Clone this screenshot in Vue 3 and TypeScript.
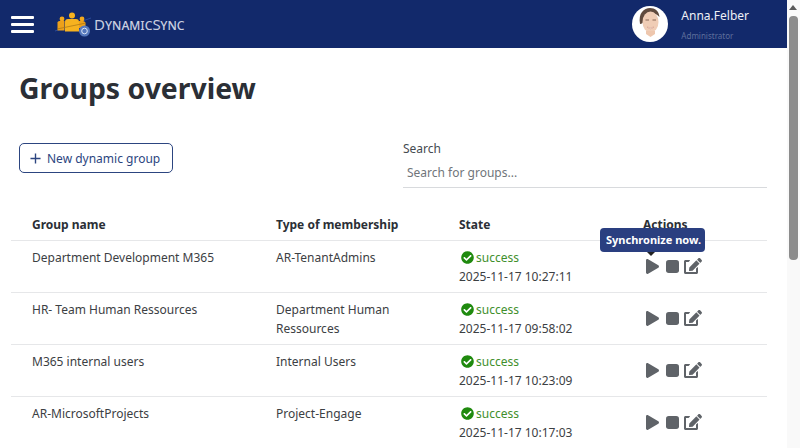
<script setup lang="ts">
import { ref } from 'vue';

interface Group {
  name: string;
  membership: string;
  state: string;
  time: string;
}

const search = ref('');

const groups: Group[] = [
  { name: 'Department Development M365', membership: 'AR-TenantAdmins', state: 'success', time: '2025-11-17 10:27:11' },
  { name: 'HR- Team Human Ressources', membership: 'Department Human Ressources', state: 'success', time: '2025-11-17 09:58:02' },
  { name: 'M365 internal users', membership: 'Internal Users', state: 'success', time: '2025-11-17 10:23:09' },
  { name: 'AR-MicrosoftProjects', membership: 'Project-Engage', state: 'success', time: '2025-11-17 10:17:03' }
];
</script>

<template>
  <div class="page">
    <div class="main">
      <header class="topbar">
        <div class="brand">
          <button class="burger" type="button" aria-label="Menu">
            <span></span><span></span><span></span>
          </button>
          <svg class="logo" viewBox="0 0 36 26" aria-hidden="true">
            <path d="M0 20 L36 7" stroke="#2b4a9a" stroke-width="1" />
            <circle cx="7" cy="8" r="2.400" fill="#f2a81d" />
            <path d="M2.500 11.500q0-1.500 2-1.500h5v9.500h-7z" fill="#eda01a" />
            <circle cx="27" cy="8" r="2.400" fill="#f2a81d" />
            <path d="M24 10h3.500q3 0 3 2.500v4.500h-6.500z" fill="#eda01a" />
            <circle cx="17" cy="4.500" r="3" fill="#f7b21f" />
            <path d="M10 11q0-3 3-3h8q3 0 3 3v9.500h-14z" fill="#f7b21f" />
            <path d="M2 18 L31 12" stroke="#9a6a10" stroke-width="0.600" />
            <circle cx="29.500" cy="20" r="5.500" fill="#5578bd" />
            <circle cx="29.500" cy="20" r="2.800" fill="none" stroke="#dbe4f5" stroke-width="1" />
          </svg>
          <span class="brand-name">DynamicSync</span>
        </div>
        <div class="user">
          <svg class="avatar" viewBox="0 0 36 36" aria-hidden="true">
            <circle cx="18" cy="18" r="18" fill="#fff" />
            <path d="M8 18C6 7 12 2 18 2c5 0 9 3 9.500 9-3-3-6-4-9-4-4 1-6 4-7 8-.5 2-1.500 3-3.500 3z" fill="#5f4a3e" />
            <ellipse cx="18.500" cy="16" rx="8" ry="10.500" fill="#f0cdb6" />
            <path d="M14 25h9v3l-4.500 3-4.500-3z" fill="#eec7ae" />
            <path d="M13.500 14h3.500M20.500 14h3.500" stroke="#8a6a56" stroke-width="1.200" />
            <path d="M15 21q3.500 1.500 7 0q-3.500 3.500-7 0z" fill="#fbf6f2" stroke="#c98a78" stroke-width="0.400" />
          </svg>
          <div class="user-text">
            <div class="user-name">Anna.Felber</div>
            <div class="user-role">Administrator</div>
          </div>
        </div>
      </header>

      <main class="content">
        <h1>Groups overview</h1>

        <div class="toolbar">
          <button class="new-btn" type="button">
            <svg viewBox="0 0 12 12" aria-hidden="true"><path d="M6 .5v11M.5 6h11" stroke="currentColor" stroke-width="1.500" /></svg>
            New dynamic group
          </button>
          <label class="search">
            <span>Search</span>
            <input v-model="search" type="text" placeholder="Search for groups..." />
          </label>
        </div>

        <div class="table">
          <div class="row head">
            <div>Group name</div>
            <div>Type of membership</div>
            <div>State</div>
            <div>Actions</div>
          </div>
          <div v-for="(g, i) in groups" :key="g.name" class="row">
            <div class="cell">{{ g.name }}</div>
            <div class="cell">{{ g.membership }}</div>
            <div class="cell">
              <div class="state">
                <svg viewBox="0 0 512 512" aria-hidden="true"><path fill="#1f8a0e" d="M504 256c0 136.967-111.033 248-248 248S8 392.967 8 256 119.033 8 256 8s248 111.033 248 248zM227.314 387.314l184-184c6.248-6.248 6.248-16.379 0-22.627l-22.627-22.627c-6.248-6.249-16.379-6.249-22.628 0L216 308.118l-70.059-70.059c-6.248-6.248-16.379-6.248-22.628 0l-22.627 22.627c-6.248 6.248-6.248 16.379 0 22.627l104 104c6.249 6.249 16.379 6.249 22.628.001z" /></svg>
                {{ g.state }}
              </div>
              <div>{{ g.time }}</div>
            </div>
            <div class="actions">
              <div v-if="i === 0" class="tooltip">Synchronize now.</div>
              <svg class="ic-play" viewBox="0 0 448 512" aria-hidden="true"><path d="M424.4 214.7L72.4 6.6C43.8-10.3 0 6.1 0 47.900V464c0 37.500 40.700 60.100 72.400 41.300l352-208c31.400-18.500 31.500-64.100 0-82.600z" /></svg>
              <svg class="ic-stop" viewBox="0 0 448 512" aria-hidden="true"><rect x="0" y="32" width="448" height="448" rx="96" /></svg>
              <svg class="ic-edit" viewBox="0 0 576 512" aria-hidden="true"><path d="M402.600 83.200l90.200 90.200c3.800 3.800 3.800 10 0 13.800L274.400 405.600l-92.800 10.300c-12.400 1.400-22.900-9.100-21.500-21.500l10.300-92.800L388.800 83.200c3.800-3.800 10-3.800 13.800 0zm162-22.900l-48.800-48.800c-15.200-15.200-39.900-15.200-55.200 0l-35.400 35.400c-3.800 3.800-3.800 10 0 13.800l90.200 90.200c3.800 3.800 10 3.800 13.800 0l35.400-35.400c15.200-15.300 15.200-40 0-55.200zM384 346.200V448H64V128h73.100c3.200 0 6.200-1.300 8.500-3.500l40-40c7.600-7.600 2.200-20.500-8.500-20.500H48C21.500 64 0 85.500 0 112v352c0 26.500 21.500 48 48 48h352c26.500 0 48-21.500 48-48V306.200c0-10.700-12.900-16-20.500-8.500l-40 40c-2.200 2.300-3.500 5.300-3.500 8.500z" /></svg>
            </div>
          </div>
        </div>
      </main>
    </div>

    <div class="scrollbar" aria-hidden="true">
      <div class="arrow"></div>
      <div class="thumb"></div>
    </div>
  </div>
</template>

<style scoped>
.page {
  display: flex;
  height: 448px;
  overflow: hidden;
  background: #fff;
  font-family: "Noto Sans", "Open Sans", sans-serif;
  font-size: 12px;
  color: #3c4043;
}

.main {
  flex: 1;
  min-width: 0;
}

.topbar {
  display: flex;
  justify-content: space-between;
  align-items: center;
  height: 48px;
  background: #12296b;
}

.brand {
  display: flex;
  align-items: center;
  padding-left: 11px;
}

.burger {
  display: flex;
  flex-direction: column;
  gap: 4px;
  width: 23px;
  padding: 0;
  border: 0;
  background: none;
}

.burger span {
  height: 3px;
  border-radius: 1px;
  background: #fff;
}

.logo {
  width: 36px;
  height: 26px;
  margin-left: 21px;
}

.brand-name {
  margin-left: 3px;
  font-variant: small-caps;
  font-size: 15px;
  color: #c9cfe0;
}

.user {
  display: flex;
  align-items: center;
  gap: 13px;
  padding-right: 38px;
}

.avatar {
  width: 36px;
  height: 36px;
}

.user-name {
  font-size: 12px;
  color: #eef0f6;
}

.user-role {
  margin-top: 6px;
  font-size: 8px;
  color: #5f6f9c;
}

.content {
  padding: 0 20px 0 11px;
}

h1 {
  margin: 20px 0 0 8px;
  font-size: 28.400px;
  line-height: 40px;
  font-weight: 700;
  color: #2b2f36;
}

.toolbar {
  display: flex;
  align-items: flex-end;
  margin-top: 32px;
  padding-left: 8px;
}

.new-btn {
  display: flex;
  align-items: center;
  gap: 6px;
  box-sizing: border-box;
  width: 154px;
  height: 30px;
  margin-bottom: 15px;
  padding: 0 0 0 10px;
  border: 1px solid #2c4580;
  border-radius: 5px;
  background: #fff;
  font: inherit;
  color: #2c4580;
}

.new-btn svg {
  width: 11px;
  height: 11px;
}

.search {
  display: flex;
  flex-direction: column;
  width: 364px;
  margin-left: 230px;
}

.search span {
  line-height: 18px;
  color: #454a50;
}

.search input {
  height: 29px;
  box-sizing: border-box;
  margin-top: 1px;
  padding: 0 4px 2px;
  border: 0;
  border-bottom: 1px solid #d8dadd;
  outline: none;
  font: inherit;
  color: #3c4043;
}

.search input::placeholder {
  color: #70757a;
}

.table {
  margin-top: 16px;
}

.row {
  display: grid;
  grid-template-columns: 244px 183px 184px 1fr;
  box-sizing: border-box;
  height: 52px;
  padding: 0 0 0 21px;
  border-top: 1px solid #e6e7e9;
  line-height: 19px;
}

.row.head {
  height: 36px;
  padding: 11px 0 0 21px;
  border-top: 0;
  font-weight: 700;
  color: #2b2f36;
}

.cell {
  padding: 7px 12px 0 0;
}

.state {
  display: flex;
  align-items: center;
  gap: 2px;
  margin-left: 2px;
  color: #3f8f2c;
}

.state svg {
  width: 13px;
  height: 13px;
}

.actions {
  position: relative;
  display: flex;
  align-items: center;
  gap: 7px;
  height: 50px;
  padding: 0 0 0 3px;
  box-sizing: border-box;
}

.actions svg {
  fill: #5f6368;
}

.ic-play {
  width: 13px;
  height: 15px;
}

.ic-stop {
  width: 13px;
  height: 15px;
}

.ic-edit {
  width: 18px;
  height: 16px;
  margin-left: -2px;
}

.tooltip {
  position: absolute;
  top: -13px;
  left: -43px;
  padding: 4px 4px 4px 6px;
  border-radius: 4px;
  background: #2a3f80;
  font-size: 11px;
  font-weight: 700;
  line-height: 16px;
  white-space: nowrap;
  color: #fff;
}

.tooltip::after {
  content: "";
  position: absolute;
  top: 100%;
  left: 47px;
  border: 4px solid transparent;
  border-top-color: #222;
  border-bottom: 0;
}

.scrollbar {
  position: relative;
  flex: none;
  width: 13px;
  background: #f9f9f9;
}

.arrow {
  position: absolute;
  top: 5px;
  left: 2px;
  border: 4px solid transparent;
  border-top: 0;
  border-bottom: 5px solid #5a5a5a;
}

.thumb {
  position: absolute;
  top: 16px;
  left: 2px;
  width: 9px;
  height: 244px;
  border-radius: 4px;
  background: #8c8c8c;
}
</style>
